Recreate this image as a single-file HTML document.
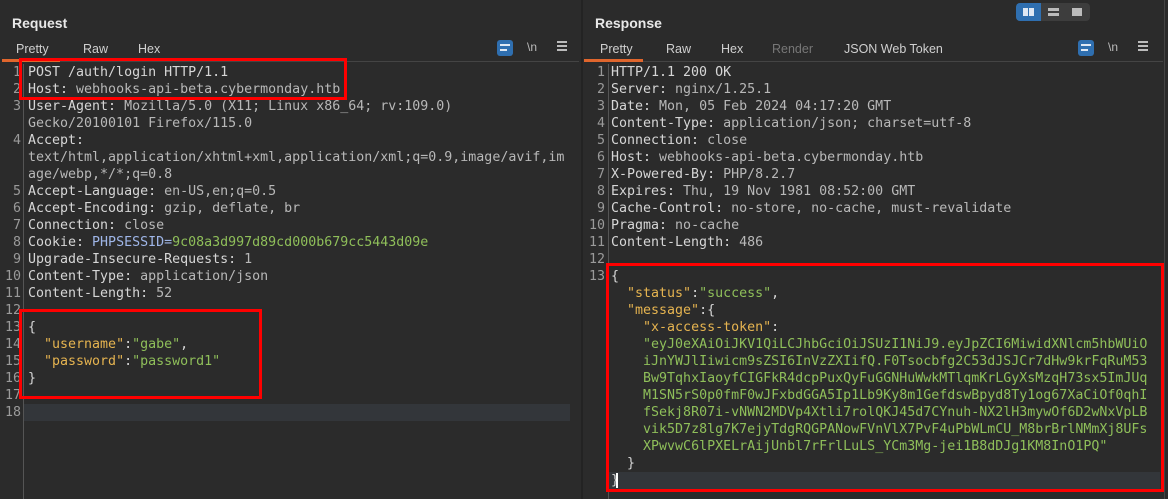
<!DOCTYPE html>
<html><head><style>
*{margin:0;padding:0;box-sizing:border-box}
body{width:1168px;height:499px;background:#2b2b2b;overflow:hidden;position:relative;font-family:"Liberation Sans",sans-serif}
.panel{position:absolute;top:0;height:499px;background:#2b2b2b}
.title{position:absolute;top:15px;font-weight:bold;font-size:14px;color:#e8e8e8}
.tabs{position:absolute;top:42px;font-size:12.5px;color:#d0d0d0}
.tabs span{position:absolute;white-space:nowrap}
.sep{position:absolute;top:61px;height:1px;background:#444}
.ul{position:absolute;top:59px;height:3px;background:#e0662d}
.ico{position:absolute;top:40px;width:16px;height:16px;border-radius:3px;background:#2f6fb0}
.ico:before,.ico:after{content:"";position:absolute;left:3px;right:3px;height:2px;background:#dfe8f3}
.ico:before{top:4px}.ico:after{top:9px;right:6px}
.nl{position:absolute;top:40px;font-size:12px;color:#bbb}
.hb{position:absolute;top:41px;width:10px}
.hb i{display:block;height:1.5px;background:#bbb;margin-bottom:2.5px}
.code{position:absolute;top:64px;font-family:"DejaVu Sans Mono","Liberation Mono",monospace;font-size:13.3px;line-height:17px;color:#d6d6d6;white-space:pre}
.gut{position:absolute;top:64px;font-family:"DejaVu Sans Mono",monospace;font-size:13.3px;line-height:17px;color:#9a9a9a;text-align:right;white-space:pre}
.vl{position:absolute;top:64px;bottom:0;width:1px;background:#555}
.v{color:#b8b8b8}.k{color:#e6b450}.s{color:#8fbf5a}.c{color:#9fb6e8}
.box{position:absolute;border:3px solid #f00}
.hl{position:absolute;height:17px;background:#33363a}
</style></head><body>
<div class="panel" style="left:0;width:581px">
 <div class="title" style="left:12px">Request</div>
 <div class="tabs"><span style="left:16px">Pretty</span><span style="left:83px">Raw</span><span style="left:138px">Hex</span></div>
 <div class="ul" style="left:2px;width:58px"></div>
 <div class="sep" style="left:60px;width:519px"></div>
 <div class="ico" style="left:497px"></div>
 <div class="nl" style="left:527px">\n</div>
 <div class="hb" style="left:557px"><i></i><i></i><i></i></div>
 <div class="hl" style="left:24px;top:404px;width:546px"></div>
 <div class="vl" style="left:23px"></div>
 <div class="gut" style="left:0;width:21px">1
2
3

4


5
6
7
8
9
10
11
12
13
14
15
16
17
18</div>
 <div class="code" style="left:28px">POST /auth/login HTTP/1.1
Host:<span class="v"> webhooks-api-beta.cybermonday.htb</span>
User-Agent:<span class="v"> Mozilla/5.0 (X11; Linux x86_64; rv:109.0)</span>
<span class="v">Gecko/20100101 Firefox/115.0</span>
Accept:
<span class="v">text/html,application/xhtml+xml,application/xml;q=0.9,image/avif,im</span>
<span class="v">age/webp,*/*;q=0.8</span>
Accept-Language:<span class="v"> en-US,en;q=0.5</span>
Accept-Encoding:<span class="v"> gzip, deflate, br</span>
Connection:<span class="v"> close</span>
Cookie: <span class="c">PHPSESSID=</span><span class="s">9c08a3d997d89cd000b679cc5443d09e</span>
Upgrade-Insecure-Requests:<span class="v"> 1</span>
Content-Type:<span class="v"> application/json</span>
Content-Length:<span class="v"> 52</span>

{
  <span class="k">"username"</span>:<span class="s">"gabe"</span>,
  <span class="k">"password"</span>:<span class="s">"password1"</span>
}
</div>
 <div class="box" style="left:19px;top:58px;width:328px;height:42px"></div>
 <div class="box" style="left:19px;top:309px;width:243px;height:90px"></div>
</div>
<div style="position:absolute;left:581px;top:0;width:2px;height:499px;background:#232323"></div>
<div class="panel" style="left:583px;width:585px">
 <div class="title" style="left:12px">Response</div>
 <div style="position:absolute;left:433px;top:3px;width:74px;height:18px;border-radius:4px;background:#3d3d3d;overflow:hidden">
  <div style="position:absolute;left:0;top:0;width:25px;height:18px;background:#2f6fb0"></div>
  <div style="position:absolute;left:7px;top:5px;width:5px;height:8px;background:#dfe8f3"></div>
  <div style="position:absolute;left:13px;top:5px;width:5px;height:8px;background:#dfe8f3"></div>
  <div style="position:absolute;left:32px;top:5px;width:11px;height:3px;background:#bbb"></div>
  <div style="position:absolute;left:32px;top:10px;width:11px;height:3px;background:#bbb"></div>
  <div style="position:absolute;left:56px;top:5px;width:10px;height:8px;background:#bbb"></div>
 </div>
 <div class="tabs"><span style="left:17px">Pretty</span><span style="left:83px">Raw</span><span style="left:138px">Hex</span><span style="left:189px;color:#777">Render</span><span style="left:261px">JSON Web Token</span></div>
 <div class="ul" style="left:1px;width:59px"></div>
 <div class="sep" style="left:60px;width:520px"></div>
 <div class="ico" style="left:495px"></div>
 <div class="nl" style="left:525px">\n</div>
 <div class="hb" style="left:555px"><i></i><i></i><i></i></div>
 <div class="hl" style="left:26px;top:472px;width:551px"></div>
 <div class="vl" style="left:25px"></div>
 <div class="gut" style="left:0;width:22px">1
2
3
4
5
6
7
8
9
10
11
12
13</div>
 <div class="code" style="left:28px">HTTP/1.1 200 OK
Server:<span class="v"> nginx/1.25.1</span>
Date:<span class="v"> Mon, 05 Feb 2024 04:17:20 GMT</span>
Content-Type:<span class="v"> application/json; charset=utf-8</span>
Connection:<span class="v"> close</span>
Host:<span class="v"> webhooks-api-beta.cybermonday.htb</span>
X-Powered-By:<span class="v"> PHP/8.2.7</span>
Expires:<span class="v"> Thu, 19 Nov 1981 08:52:00 GMT</span>
Cache-Control:<span class="v"> no-store, no-cache, must-revalidate</span>
Pragma:<span class="v"> no-cache</span>
Content-Length:<span class="v"> 486</span>

{
  <span class="k">"status"</span>:<span class="s">"success"</span>,
  <span class="k">"message"</span>:{
    <span class="k">"x-access-token"</span>:
    <span class="s">"eyJ0eXAiOiJKV1QiLCJhbGciOiJSUzI1NiJ9.eyJpZCI6MiwidXNlcm5hbWUiO</span>
    <span class="s">iJnYWJlIiwicm9sZSI6InVzZXIifQ.F0Tsocbfg2C53dJSJCr7dHw9krFqRuM53</span>
    <span class="s">Bw9TqhxIaoyfCIGFkR4dcpPuxQyFuGGNHuWwkMTlqmKrLGyXsMzqH73sx5ImJUq</span>
    <span class="s">M1SN5rS0p0fmF0wJFxbdGGA5Ip1Lb9Ky8m1GefdswBpyd8Ty1og67XaCiOf0qhI</span>
    <span class="s">fSekj8R07i-vNWN2MDVp4Xtli7rolQKJ45d7CYnuh-NX2lH3mywOf6D2wNxVpLB</span>
    <span class="s">vik5D7z8lg7K7ejyTdgRQGPANowFVnVlX7PvF4uPbWLmCU_M8brBrlNMmXj8UFs</span>
    <span class="s">XPwvwC6lPXELrAijUnbl7rFrlLuLS_YCm3Mg-jei1B8dDJg1KM8InO1PQ"</span>
  }
}</div>
 <div style="position:absolute;left:33px;top:473px;width:2px;height:15px;background:#fff"></div>
 <div class="box" style="left:23px;top:263px;width:558px;height:229px"></div>
 <div style="position:absolute;left:581px;top:0;width:1px;height:499px;background:#444"></div>
</div>
</body></html>
